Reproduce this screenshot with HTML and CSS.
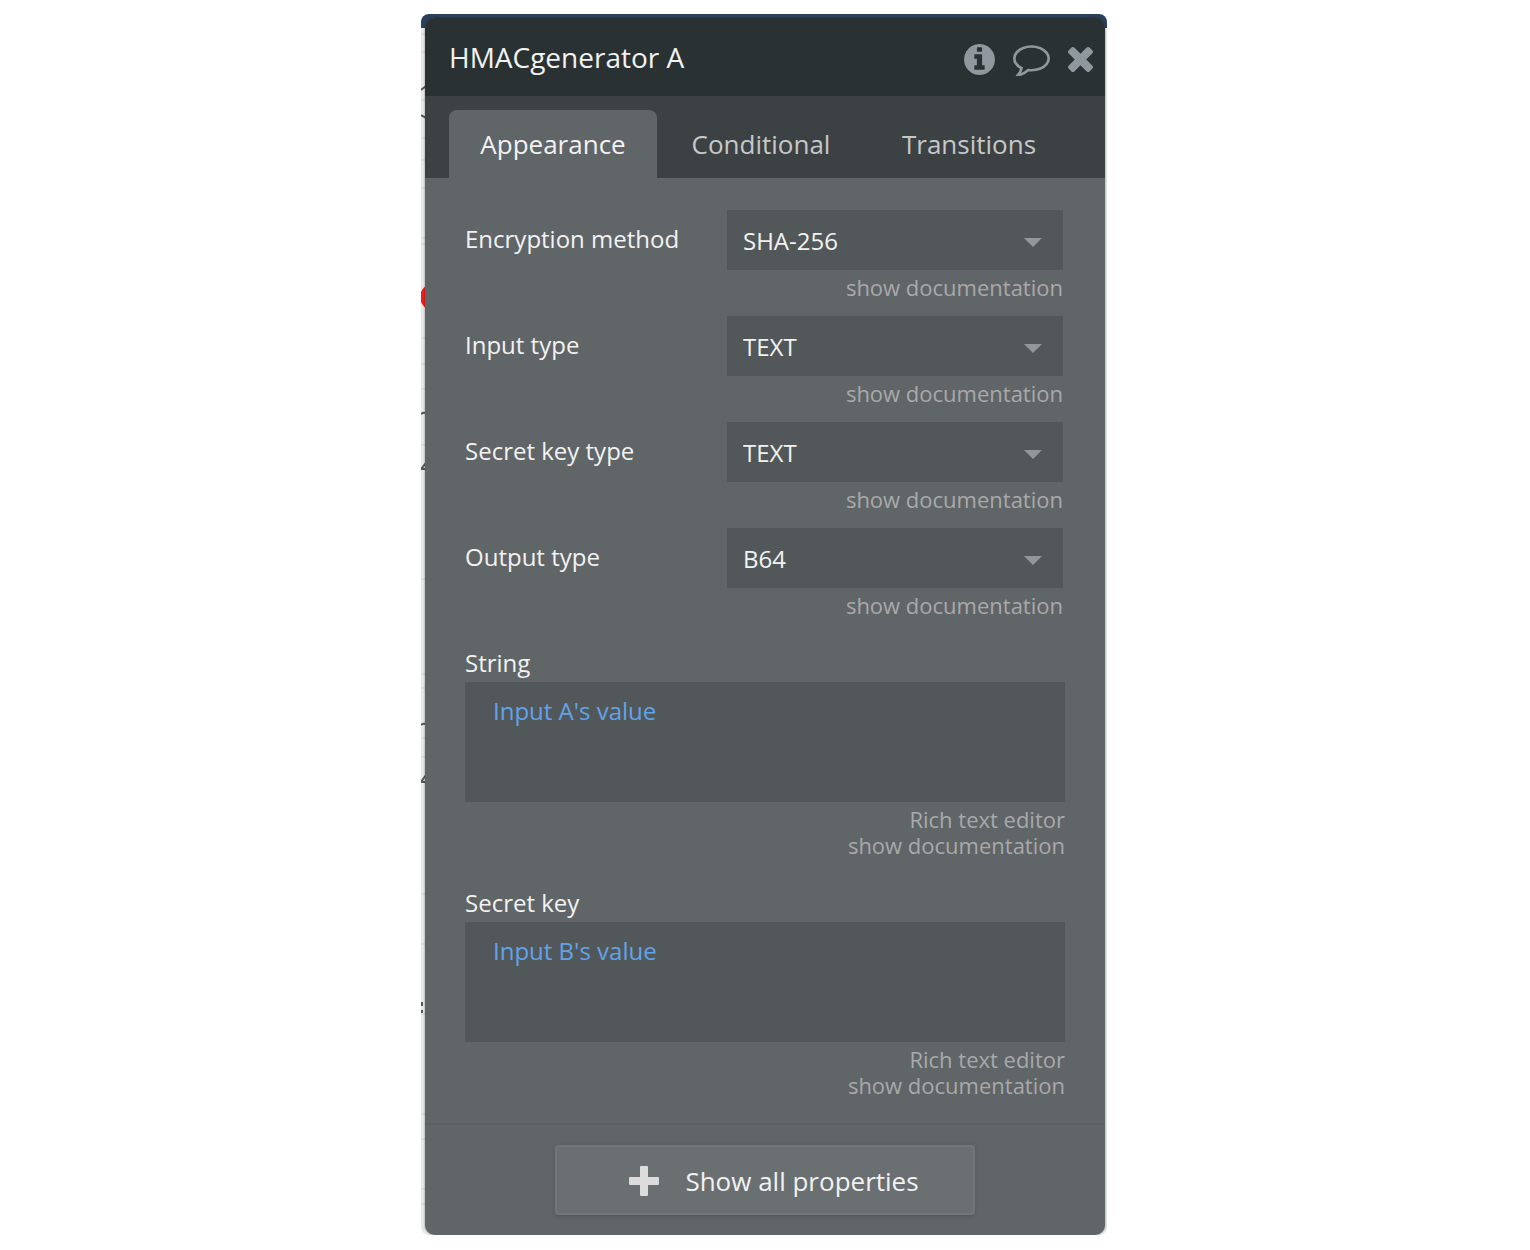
FILE: index.html
```html
<!DOCTYPE html>
<html lang="en">
<head>
<meta charset="UTF-8">
<meta name="viewport" content="width=device-width, initial-scale=1">
<title>HMACgenerator A</title>
<link rel="stylesheet" href="styles.css">
</head>
<body>
    <div class="canvas">
        <!-- bits of the editor canvas that show past the panel -->
        <svg class="canvas-edge" width="5" height="1222" viewBox="0 0 5 1222" aria-hidden="true">
            <path d="M0 20h5M0 38h5M0 86h5M0 124h5M0 146h5M0 174h5M0 224h5M0 230h5M0 324h5M0 350h5M0 375h5M0 431h5M0 565h5M0 660h5M0 674h5M0 724h5M0 743h5M0 880h5M0 930h5M0 1000h5M0 1100h5M0 1125h5M0 1175h5M0 1190h5" stroke="#cfd0d0"/>
            <path d="M0 76l5-4M0 101l5 3M0 400q2-2 5-1M0 455l5-6M0 455h5M0 711q2-2 5-1M0 768l5-7M0 768h5M1 988v4M1 996v3" fill="none" stroke="#555" stroke-width="2"/>
            <circle cx="12" cy="283" r="13" fill="#f01c1c"/>
        </svg>
        <section class="panel">
            <header class="panel-header">
                <h1>HMACgenerator A</h1>
                <div class="header-actions">
                    <button type="button" aria-label="Info">
                        <svg width="31" height="31" viewBox="128 128 1536 1536"><path d="M1152 1376v-160q0-14-9-23t-23-9h-96v-512q0-14-9-23t-23-9h-320q-14 0-23 9t-9 23v160q0 14 9 23t23 9h96v320h-96q-14 0-23 9t-9 23v160q0 14 9 23t23 9h448q14 0 23-9t9-23zm-128-896v-160q0-14-9-23t-23-9h-192q-14 0-23 9t-9 23v160q0 14 9 23t23 9h192q14 0 23-9t9-23zm640 416q0 209-103 385.5t-279.5 279.5-385.5 103-385.5-103-279.5-279.5-103-385.5 103-385.5 279.5-279.5 385.5-103 385.5 103 279.5 279.5 103 385.5z"/></svg>
                    </button>
                    <button type="button" aria-label="Comment">
                        <svg width="37" height="34" viewBox="0 150 1792 1550"><path d="M896 384q-204 0-381.500 69.500t-282 187.500-104.500 255q0 112 71.500 213.500t201.500 175.500l87 50-27 96q-24 91-70 172 152-63 275-171l43-38 57 6q69 8 130 8 204 0 381.500-69.500t282-187.500 104.500-255-104.500-255-282-187.500-381.500-69.500zm896 512q0 174-120 321.500t-326 233-450 85.500q-70 0-145-8-198 175-460 242-49 14-114 22h-5q-15 0-27-10.500t-16-27.500v-1q-3-4-.5-12t2-10 4.500-9.500l6-9 7-8.500 8-9q7-8 31-34.500t34.500-38 31-39.500 32.500-51 27-59 26-76q-157-89-247.500-220t-90.500-281q0-174 120-321.500t326-233 450-85.500 450 85.500 326 233 120 321.500z"/></svg>
                    </button>
                    <button type="button" aria-label="Close">
                        <svg width="25" height="25" viewBox="302 366 1188 1188"><path d="M1490 1322q0 40-28 68l-136 136q-28 28-68 28t-68-28l-294-294-294 294q-28 28-68 28t-68-28l-136-136q-28-28-28-68t28-68l294-294-294-294q-28-28-28-68t28-68l136-136q28-28 68-28t68 28l294 294 294-294q28-28 68-28t68 28l136 136q28 28 28 68t-28 68l-294 294 294 294q28 28 28 68z"/></svg>
                    </button>
                </div>
            </header>
            <nav class="tabs">
                <button type="button" class="tab active">Appearance</button>
                <button type="button" class="tab">Conditional</button>
                <button type="button" class="tab">Transitions</button>
            </nav>
            <form class="properties">
                <div class="row">
                    <label for="method">Encryption method</label>
                    <div class="select-box">
                        <select id="method">
                            <option>SHA-256</option>
                        </select>
                    </div>
                    <a class="doc-link" href="#">show documentation</a>
                </div>
                <div class="row">
                    <label for="inputType">Input type</label>
                    <div class="select-box">
                        <select id="inputType">
                            <option>TEXT</option>
                        </select>
                    </div>
                    <a class="doc-link" href="#">show documentation</a>
                </div>
                <div class="row">
                    <label for="keyType">Secret key type</label>
                    <div class="select-box">
                        <select id="keyType">
                            <option>TEXT</option>
                        </select>
                    </div>
                    <a class="doc-link" href="#">show documentation</a>
                </div>
                <div class="row">
                    <label for="outputType">Output type</label>
                    <div class="select-box">
                        <select id="outputType">
                            <option>B64</option>
                        </select>
                    </div>
                    <a class="doc-link" href="#">show documentation</a>
                </div>
                <div class="block">
                    <label for="string">String</label>
                    <textarea id="string" spellcheck="false">Input A's value</textarea>
                    <div class="links">
                        <a href="#">Rich text editor</a>
                        <a href="#">show documentation</a>
                    </div>
                </div>
                <div class="block">
                    <label for="secretKey">Secret key</label>
                    <textarea id="secretKey" spellcheck="false">Input B's value</textarea>
                    <div class="links">
                        <a href="#">Rich text editor</a>
                        <a href="#">show documentation</a>
                    </div>
                </div>
            </form>
            <footer class="panel-footer">
                <button type="button" class="show-all">
                    <svg width="30" height="30" viewBox="0 0 30 30" aria-hidden="true"><path d="M12 0h6q1 0 1 1v10h10q1 0 1 1v6q0 1-1 1H19v10q0 1-1 1h-6q-1 0-1-1V19H1q-1 0-1-1v-6q0-1 1-1h10V1q0-1 1-1z"/></svg>
                    Show all properties
                </button>
            </footer>
        </section>
    </div>
</body>
</html>
```

FILE: styles.css
```css
* {
    box-sizing: border-box;
}
body {
    margin: 0;
    padding: 14px 2px 14px 0;
    background: white;
    color: #f2f2f2;
    font-family: "Open Sans", sans-serif;
    font-size: 24px;
}
button, select, textarea {
    font: inherit;
    color: inherit;
    border: none;
}
button {
    padding: 0;
    background: none;
    cursor: pointer;
}
.canvas {
    position: relative;
    max-width: 686px;
    margin: 0 auto;
    padding: 4px 2px 0 4px;
    border-radius: 8px;
    background: linear-gradient(#2b405c 14px, #e8e9e9 14px);
    overflow: hidden;
}
.canvas-edge {
    position: absolute;
    top: 0;
    left: 0;
}
.panel {
    position: relative;
    background: #606568;
    border-radius: 10px;
    box-shadow: 0 0 2px rgba(0,0,0,0.5);
    overflow: hidden;
}
.panel-header {
    display: flex;
    align-items: center;
    justify-content: space-between;
    height: 78px;
    padding: 4px 12px 0 24px;
    background: #2a3133;
}
.panel-header h1 {
    margin: 0;
    padding-bottom: 4px;
    font-size: 28px;
    font-weight: 400;
}
.header-actions {
    display: flex;
    align-items: center;
    gap: 18px;
}
.header-actions svg {
    display: block;
    fill: #8f999d;
}
.tabs {
    display: flex;
    padding: 14px 24px 0;
    background: #3c4143;
}
.tab {
    flex: 0 1 208px;
    height: 68px;
    border-radius: 8px 8px 0 0;
    color: #c6c8c9;
    font-size: 26px;
}
.tab.active {
    background: #606568;
    color: #f2f2f2;
}
.properties {
    padding: 32px 40px 25px;
}
.row {
    display: grid;
    grid-template-columns: 1fr 336px;
    padding: 0 2px 12px 0;
}
.row label {
    line-height: 58px;
}
.select-box {
    position: relative;
}
.select-box::after {
    content: "";
    position: absolute;
    top: 28px;
    right: 21px;
    border: 9px solid transparent;
    border-top-color: #92979a;
    border-bottom: none;
    pointer-events: none;
}
select {
    appearance: none;
    display: block;
    width: 100%;
    height: 60px;
    padding: 0 16px;
    border-radius: 0;
    background: #525759;
}
a {
    color: #a9a9a9;
    font-size: 22px;
    text-decoration: none;
}
.doc-link {
    grid-column: 2;
    line-height: 34px;
    text-align: right;
}
.block {
    margin-top: 12px;
}
.block + .block {
    margin-top: 28px;
}
.block label {
    display: block;
    padding-bottom: 2px;
    line-height: 34px;
}
textarea {
    display: block;
    width: 100%;
    height: 120px;
    padding: 12px 28px;
    border-radius: 0;
    background: #525759;
    color: #62a3e8;
    line-height: 34px;
    resize: none;
}
.links {
    display: flex;
    flex-direction: column;
    align-items: flex-end;
    padding-top: 4px;
    line-height: 26px;
}
.panel-footer {
    padding: 20px;
    border-top: 2px solid #5a5f61;
}
.show-all {
    display: flex;
    align-items: center;
    justify-content: center;
    gap: 26px;
    width: 100%;
    max-width: 420px;
    height: 70px;
    margin: 0 auto;
    padding: 2px 0 0 18px;
    border: 2px solid #717678;
    border-radius: 4px;
    background: #6a6f71;
    box-shadow: 0 1px 4px rgba(0,0,0,0.15);
    font-size: 26px;
}
.show-all svg {
    fill: #dcdcdc;
}
```
